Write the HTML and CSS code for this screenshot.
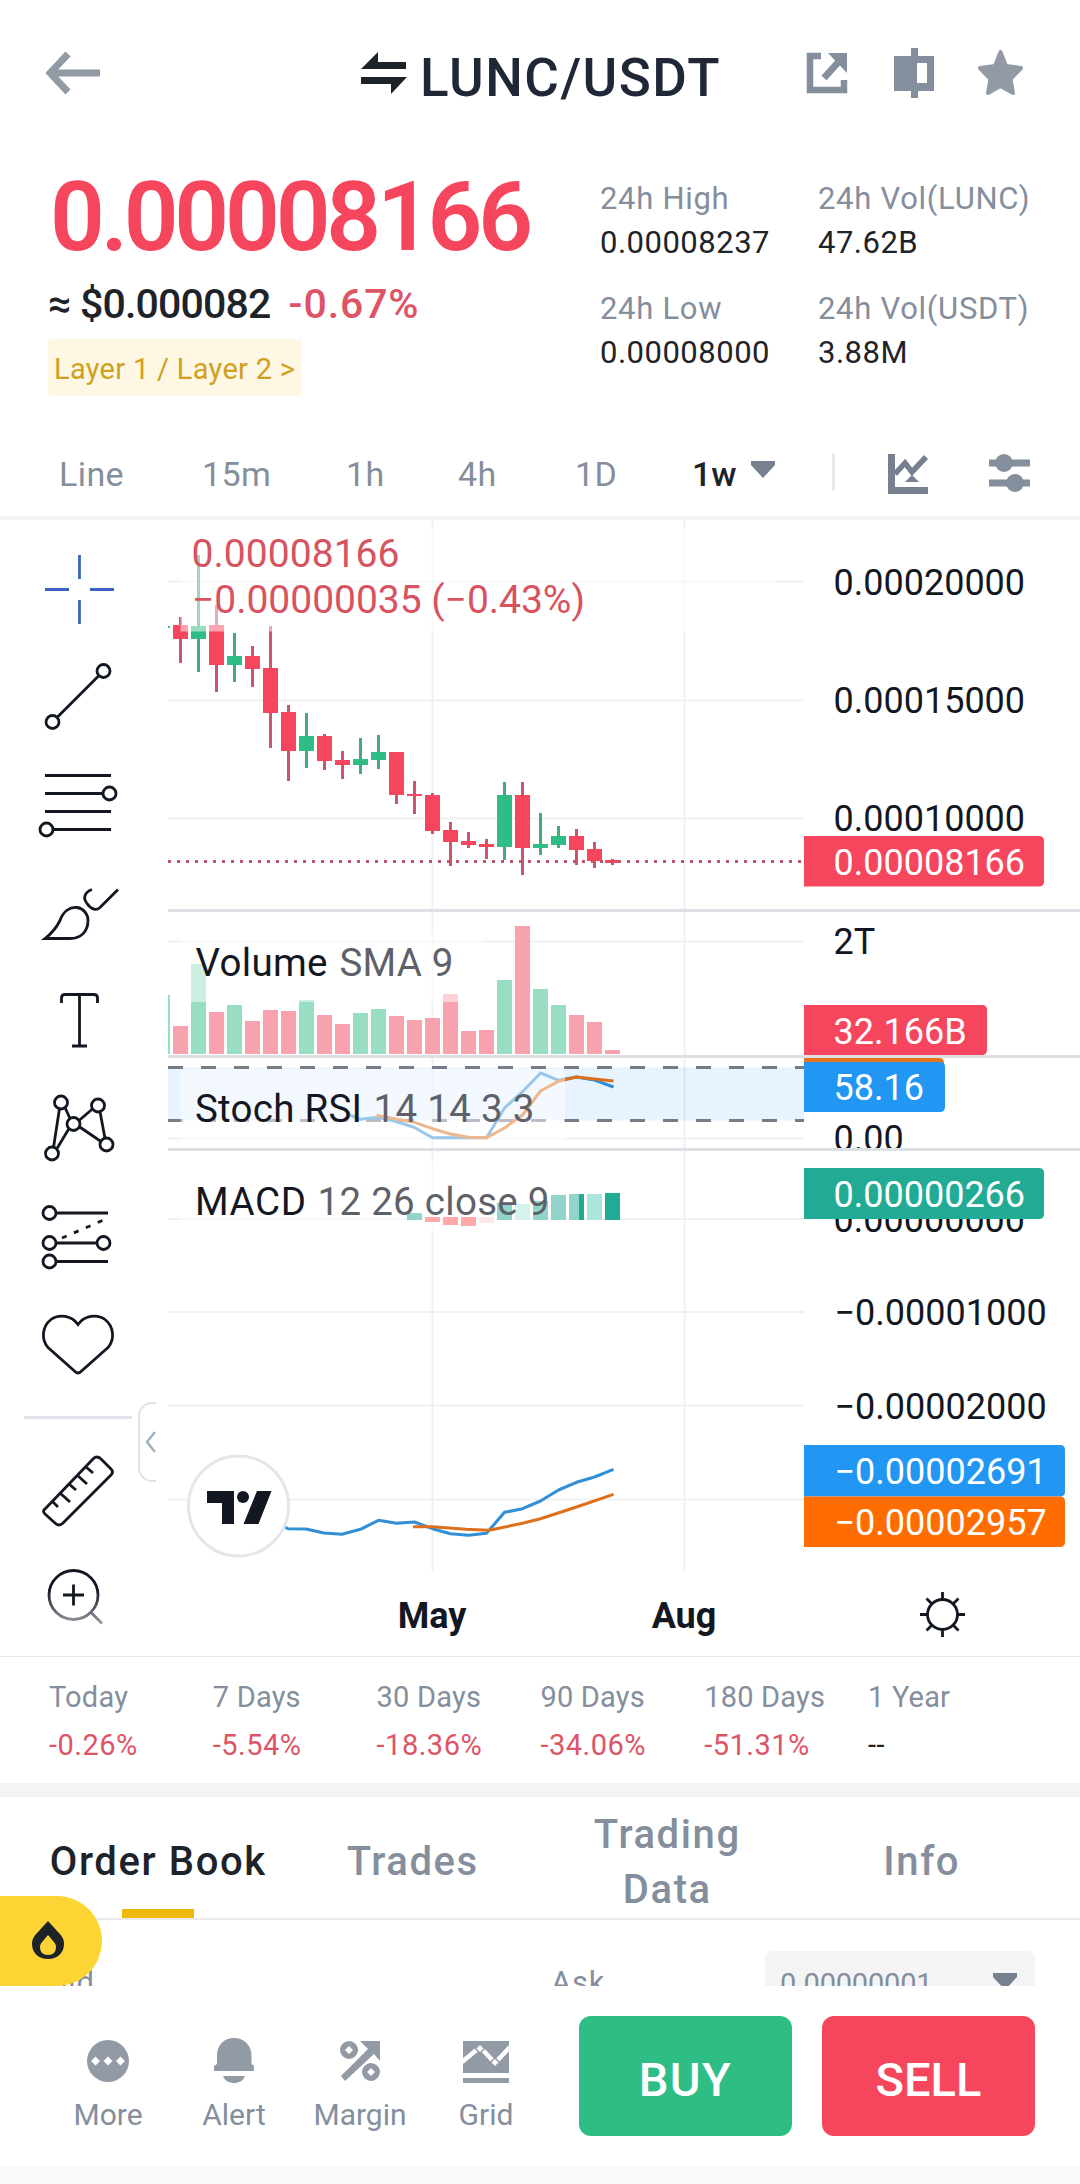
FILE: index.html
```html
<!DOCTYPE html>
<html lang="en">
<head>
    <meta charset="UTF-8">
    <meta name="viewport" content="width=device-width, initial-scale=1.0">
    <title>LUNC/USDT</title>
    <link rel="stylesheet" href="styles.css">
</head>
<body>
    <header class="header">
        <svg class="back" width="54" height="44" viewBox="45 51 54 44"><path d="M67 54 49 73l18 19M49 73h50" fill="none" stroke="#929aa5" stroke-width="7"/></svg>
        <svg class="swap" width="46" height="44" viewBox="361 51 46 44" fill="#1e2329"><path d="M361 69 378 52v10h28v7zM361 77h46l-16 17V84h-30z"/></svg>
        <h1 class="pair">LUNC/USDT</h1>
        <div class="header-icons">
            <svg width="46" height="52" viewBox="804 47 46 52"><path d="M821 56h-11v34h34V80" fill="none" stroke="#848e9c" stroke-width="6.500"/><path d="M824 78l18-20" stroke="#848e9c" stroke-width="7"/><path d="M828 53h19v20z" fill="#848e9c"/></svg>
            <svg width="46" height="52" viewBox="891 47 46 52" fill="#848e9c"><path fill-rule="evenodd" d="M894 56h17v-8h7v8h16v35h-16v7h-7v-7h-17zM917 63v20h10V63z"/></svg>
            <svg width="46" height="52" viewBox="978 47 46 52"><path d="M1000.500 52l5.500 14 15 2-10.500 11 2.500 14-12.500-7-12.500 7 2.500-14L980 68l15-2z" fill="#929aa5" stroke="#929aa5" stroke-width="4" stroke-linejoin="round"/></svg>
        </div>
    </header>

    <section class="summary">
        <div class="summary-main">
            <div class="price">0.00008166</div>
            <div class="fiat"><span class="fiat-value">≈ $0.000082</span><span class="fiat-change">-0.67%</span></div>
            <a class="tag">Layer 1 / Layer 2 &gt;</a>
        </div>
        <dl class="stats">
            <div><dt>24h High</dt><dd>0.00008237</dd></div>
            <div><dt>24h Vol(LUNC)</dt><dd>47.62B</dd></div>
            <div><dt>24h Low</dt><dd>0.00008000</dd></div>
            <div><dt>24h Vol(USDT)</dt><dd>3.88M</dd></div>
        </dl>
    </section>

    <nav class="intervals">
        <span>Line</span>
        <span>15m</span>
        <span>1h</span>
        <span>4h</span>
        <span>1D</span>
        <span class="active">1w</span>
        <svg class="caret" width="24" height="17" viewBox="0 0 24 17"><path d="M0 0h24v4L12 17 0 4z" fill="#76808f"/></svg>
        <i class="sep"></i>
        <svg width="42" height="42" viewBox="888 452 42 42"><path d="M889 453h7v33h33v7h-40z" fill="#76808f"/><path d="M896 473l10-11 7 9 14-15" fill="none" stroke="#76808f" stroke-width="5.500"/><path d="M913 474l7 7h-14z" fill="#76808f"/></svg>
        <svg width="42" height="42" viewBox="990 451 42 42" fill="#848e9c"><path d="M990 457.500h41v7h-41zM990 477.500h41v7h-41z"/><circle cx="1005" cy="461" r="9"/><circle cx="1016" cy="481" r="9"/></svg>
    </nav>

    <section class="chart">
        <aside class="tools">
            <svg class="tool" viewBox="0 536 168 107.500"><path class="cross" d="M79.500 555v24M79.500 600v24M45 589.500h24M90 589.500h24"/></svg>
            <svg class="tool" viewBox="0 643.500 168 107.500"><path d="M57 717l42-42"/><circle cx="103.500" cy="670.500" r="6.500"/><circle cx="52.500" cy="721.500" r="6.500"/></svg>
            <svg class="tool" viewBox="0 751 168 107.500"><path d="M45 775.500h66M45 793.500h58M45 811.500h66M53 829.500h58"/><circle cx="109.500" cy="793.500" r="6.500"/><circle cx="46.500" cy="829.500" r="6.500"/></svg>
            <svg class="tool" viewBox="0 858.500 168 107.500"><path d="M45 938c8-6 12-12 15-18 3-9 10-14 17-13 7 1 11 7 11 13 0 11-7 18-18 18zM92 889c-8 3-9 9-5 14 4 6 10 8 14 3l17-17"/></svg>
            <svg class="tool" viewBox="0 966 168 107.500"><path d="M61.500 1003v-5q0-3.500 3.500-3.500h29q3.500 0 3.500 3.500v5M79.500 995v51M72 1046h15"/></svg>
            <svg class="tool" viewBox="0 1073.500 168 107.500"><path d="M59.500 1108l-6 39M65 1107l5 11M57 1148l12-20M79 1120l14-12M100 1111l5 27M79 1126l22 15"/><circle cx="61" cy="1102" r="6.500"/><circle cx="98" cy="1105" r="6.500"/><circle cx="73.500" cy="1123.500" r="6.500"/><circle cx="106.500" cy="1144" r="6.500"/><circle cx="52" cy="1153" r="6.500"/></svg>
            <svg class="tool" viewBox="0 1181 168 107.500"><path d="M56 1213h52M56 1243h41M56 1261.500h52"/><path d="M62 1238l44-19" stroke-dasharray="5 8"/><circle cx="49.500" cy="1213" r="6.500"/><circle cx="49.500" cy="1243" r="6.500"/><circle cx="103.500" cy="1243" r="6.500"/><circle cx="49.500" cy="1261.500" r="6.500"/></svg>
            <svg class="tool" viewBox="0 1288.500 168 107.500"><path d="M78 1324c-6-9-19-11-27-5-9 7-10 20-3 28l27 24q3 3 6 0l27-24c7-8 6-21-3-28-8-6-21-4-27 5z"/></svg>
            <i class="tools-line"></i>
            <svg class="tool" viewBox="0 1437 168 107.500"><path d="M45 1509l48-50q4-4 8 0l10 10q3 3 0 6l-48 48q-4 4-8 0l-10-9q-3-3 0-5zM52 1501l6 6M60 1493l10 9M69 1484l7 6M77 1475l10 9M86 1467l7 6"/></svg>
            <svg class="tool" viewBox="0 1544.500 168 107.500">
                <defs><linearGradient id="fade" gradientUnits="userSpaceOnUse" x1="0" y1="1590" x2="0" y2="1624"><stop offset="0" stop-color="#131722"/><stop offset="1" stop-color="#9a9da5"/></linearGradient></defs>
                <circle class="lens" cx="73.500" cy="1594.500" r="24.500"/><path class="lens" d="M91 1612l11 11"/><path d="M63 1594.500h21M73.500 1584v21"/>
            </svg>
            <div class="tools-handle"><svg width="12" height="22" viewBox="0 0 12 22"><path d="M10 1 2 11l8 10" fill="none" stroke="#9db2bd" stroke-width="2.500"/></svg></div>
        </aside>

        <svg class="plot" width="912" height="1140" viewBox="168 516 912 1140">
            <g class="grid">
                <path d="M432.500 516v1055M684.500 516v1055"/>
                <path d="M168 581.500h636M168 700.500h636M168 818.500h636M168 941.500h636M168 1138.500h636M168 1219h636M168 1312h636M168 1405.500h636M168 1499.500h636"/>
            </g>

            <!-- stoch rsi band -->
            <path d="M168 1067.500h636v53H168z" fill="#2196f3" fill-opacity=".11"/>
            <path class="band-line" d="M168 1067.500h636M168 1120.500h636"/>
            <path class="line-k" d="M350 1115 360 1119.300 378.500 1117.300 395 1121.300 414 1127.300 432.500 1137.700H486.500L504.500 1108 522.500 1091.700 540.500 1073 558.500 1080.300 576.500 1077 594.500 1080 613.500 1087"/>
            <path class="line-d" d="M376.500 1115.300 396.500 1119.300 414.500 1122.300 432.500 1128.700 450.500 1134 468.500 1137.300 486.500 1137.700 504.500 1128 522.500 1115 540.500 1091 558.500 1081.300 576.500 1077 594.500 1079 613.500 1081"/>

            <g id="candles"><path d="M168 626h2v2h-2z" fill="#2ebd85"/></g>
            <g id="volume"><path d="M168 995h2v59h-2z" fill="#97dec2"/></g>
            <g id="histogram"></g>

            <!-- macd and signal -->
            <path class="line-k" d="M282 1525.500 288 1528.700 306 1529 324 1533 342 1534.300 360.500 1529.300 378.500 1520.300 396.500 1523.300 414.500 1522 432.500 1528.700 450.500 1533.700 468.500 1535.300 486.500 1533.300 504.500 1512.300 522.500 1508.700 540.500 1501 558.500 1490 576.500 1482.300 594.500 1477 613.500 1469.300"/>
            <path class="line-d" d="M413 1526.700H432.500L466 1529.300 489 1530.300 522.500 1523.300 540.500 1518.700 576.500 1507 613.500 1494.300"/>

            <path class="price-line" d="M168 861.500h636"/>

            <g fill="#fff" fill-opacity=".5">
                <path d="M180.500 528h595v103.500h-595z"/>
                <path d="M180.500 932h304v70h-304z"/>
                <path d="M180.500 1069h384.500v71h-384.500z"/>
                <path d="M180.500 1162h398.500v71h-398.500z"/>
            </g>

            <path class="pane-line" d="M168 910.500h912M168 1056.500h912M168 1149.500h912"/>

            <g class="quote">
                <text x="191.500" y="566.500" textLength="208">0.00008166</text>
                <text x="192" y="612.500" textLength="393">−0.00000035 (−0.43%)</text>
            </g>
            <g class="legend">
                <text x="195.500" y="975.500" textLength="132">Volume</text><text class="muted" x="339.500" y="975.500" textLength="114">SMA 9</text>
                <text x="195" y="1121.500" textLength="167">Stoch RSI</text><text class="muted" x="373.500" y="1121.500" textLength="161">14 14 3 3</text>
                <text x="195" y="1214.500" textLength="111">MACD</text><text class="muted" x="317.500" y="1214.500" textLength="232">12 26 close 9</text>
            </g>

            <g class="axis">
                <text x="833.500" y="594.500">0.00020000</text>
                <text x="833.500" y="712.500">0.00015000</text>
                <text x="833.500" y="830.500">0.00010000</text>
                <text x="833.500" y="954">2T</text>
                <text x="833.500" y="1231.500">0.00000000</text>
                <text x="834.500" y="1325">−0.00001000</text>
                <text x="834.500" y="1418.500">−0.00002000</text>
            </g>
            <svg x="804" y="1112" width="276" height="36"><text class="axis" x="29.500" y="38.500">0.00</text></svg>

            <path d="M804 1058h135q5 0 5 5v5H804z" fill="#e5751f"/>
            <g class="badges">
                <path d="M804 836h235q5 0 5 5v40.500q0 5-5 5H804z" fill="#f6465d"/><text x="833.500" y="875">0.00008166</text>
                <path d="M804 1005h178q5 0 5 5v40q0 5-5 5H804z" fill="#f6465d"/><text x="833.500" y="1044">32.166B</text>
                <path d="M804 1062h136q5 0 5 5v40q0 5-5 5H804z" fill="#2196f3"/><text x="833.500" y="1100">58.16</text>
                <path d="M804 1168h235q5 0 5 5v41q0 5-5 5H804z" fill="#22ab94"/><text x="833.500" y="1207">0.00000266</text>
                <path d="M804 1445h256q5 0 5 5v41.500q0 5-5 5H804z" fill="#2196f3"/><text x="834.500" y="1484">−0.00002691</text>
                <path d="M804 1496.500h256q5 0 5 5v40.500q0 5-5 5H804z" fill="#ff6d00"/><text x="834.500" y="1535">−0.00002957</text>
            </g>

            <circle cx="238.500" cy="1506" r="50" fill="#fff" stroke="#e6e6e6" stroke-width="3"/>
            <path d="M207 1491h27v33h-12v-21h-15zM257 1491h14.500l-13 33h-15z" fill="#131722"/>
            <circle cx="243" cy="1497" r="6" fill="#131722"/>

            <g class="months">
                <text x="432" y="1627.500">May</text>
                <text x="684" y="1627.500">Aug</text>
            </g>
            <g class="gear">
                <circle cx="942.500" cy="1614.500" r="15"/>
                <path d="M942.500 1592v7M942.500 1630v7M920 1614.500h7M958 1614.500h7M926.500 1598.500l5 5M953.500 1625.500l5 5M958.500 1598.500l-5 5M931.500 1625.500l-5 5"/>
            </g>
        </svg>
    </section>

    <section class="performance">
        <div><span>Today</span><b>-0.26%</b></div>
        <div><span>7 Days</span><b>-5.54%</b></div>
        <div><span>30 Days</span><b>-18.36%</b></div>
        <div><span>90 Days</span><b>-34.06%</b></div>
        <div><span>180 Days</span><b>-51.31%</b></div>
        <div><span>1 Year</span><b class="none">--</b></div>
    </section>

    <nav class="tabs">
        <a class="tab active">Order Book</a>
        <a class="tab">Trades</a>
        <a class="tab">Trading<br>Data</a>
        <a class="tab">Info</a>
    </nav>

    <section class="orders">
        <span class="bid">Bid</span>
        <span class="ask">Ask</span>
        <div class="precision"><span>0.00000001</span><svg width="24" height="17" viewBox="0 0 24 17"><path d="M0 0h24v4L12 17 0 4z" fill="#76808f"/></svg></div>
    </section>

    <button class="fire">
        <svg width="34" height="40" viewBox="31 1920 34 40"><path fill-rule="evenodd" d="M48 1921l10 11c4 4 6 7 6 12 0 9-7 15-16 15s-16-6-16-15c0-5 2-8 6-12zM48 1935l-5 6c-2 2-3 4-3 6 0 5 3 8 8 8s8-3 8-8c0-2-1-4-3-6z" fill="#1e2329"/></svg>
    </button>

    <footer class="bottom-bar">
        <a class="action">
            <svg width="48" height="48" viewBox="84 2037 48 48"><circle cx="108" cy="2061" r="21"/><path d="M95.500 2056.500l4.500 4.500-4.500 4.500L91 2061zM108 2056.500l4.500 4.500-4.500 4.500-4.500-4.500zM120.500 2056.500l4.500 4.500-4.500 4.500-4.500-4.500z" fill="#fff"/></svg>
            <span>More</span>
        </a>
        <a class="action">
            <svg width="48" height="48" viewBox="210 2037 48 48"><path d="M217 2056c0-11 7-18 17-18s17.500 7 17.500 18v8l2.500 2v5h-40v-5l3-2zM223 2076h22c-2 5-6 7-11 7s-9-2-11-7z"/></svg>
            <span>Alert</span>
        </a>
        <a class="action">
            <svg width="48" height="48" viewBox="336 2037 48 48"><path fill-rule="evenodd" d="M349 2041a9 9 0 1 0 0 18 9 9 0 0 0 0-18zM349 2046l4 4-4 4-4-4zM371 2063a9 9 0 1 0 0 18 9 9 0 0 0 0-18zM371 2068l4 4-4 4-4-4zM360 2041h20v20l-6-7-29 27-4-5 27-27z"/></svg>
            <span>Margin</span>
        </a>
        <a class="action">
            <svg width="48" height="48" viewBox="462 2037 48 48"><path d="M463 2041h46v32h-46zM463 2078h46v5h-46z"/><path d="M462 2062l18-15 15 16 15-16" fill="none" stroke="#fff" stroke-width="4.500"/><path d="M480 2044l4.500 4.500-4.500 4.500-4.500-4.500zM495 2058l4.500 4.500-4.500 4.500-4.500-4.500z" fill="#fff" stroke="#929aa5" stroke-width="1.500"/></svg>
            <span>Grid</span>
        </a>
        <button class="trade buy">BUY</button>
        <button class="trade sell">SELL</button>
    </footer>

    <script src="script.js"></script>
</body>
</html>
```

FILE: styles.css
```css
* {
    margin: 0;
    padding: 0;
    box-sizing: border-box;
}

body {
    position: relative;
    width: 1080px;
    height: 2184px;
    overflow: hidden;
    background: #fafafa;
    color: #1e2329;
    font-family: Roboto, "Liberation Sans", sans-serif;
}

svg {
    display: block;
    flex: none;
}

button {
    border: none;
    font-family: inherit;
}

/* Header */
.header {
    display: flex;
    align-items: center;
    height: 146px;
    padding: 0 56px 0 46px;
    background: #fff;
}

.swap {
    margin-left: 261px;
}

.pair {
    margin-left: 13px;
    padding-top: 10px;
    font-size: 53px;
    line-height: 60px;
    font-weight: 500;
    letter-spacing: 1.5px;
    color: #202838;
    white-space: nowrap;
}

.header-icons {
    display: flex;
    gap: 41px;
    margin-left: auto;
}

/* Price summary */
.summary {
    display: flex;
    height: 287px;
    padding: 20px 0 0 48px;
    background: #fff;
}

.summary-main {
    width: 552px;
}

.price {
    height: 100px;
    padding-left: 2px;
    font-size: 96px;
    line-height: 102px;
    font-weight: 600;
    letter-spacing: -4.2px;
    color: #f6465d;
}

.fiat {
    display: flex;
    gap: 18px;
    margin-top: 12px;
    font-size: 41px;
    line-height: 52px;
    height: 50px;
    font-weight: 500;
    letter-spacing: -0.8px;
}

.fiat-change {
    color: #dd5467;
    letter-spacing: 0.9px;
}

.tag {
    display: block;
    width: 254px;
    height: 57px;
    margin-top: 11px;
    padding-left: 6px;
    border-radius: 4px;
    background: #fdf7e3;
    color: #d0a11e;
    font-size: 29px;
    line-height: 60px;
    letter-spacing: 0.3px;
    white-space: nowrap;
}

.stats {
    display: grid;
    grid-template-columns: 218px 240px;
    row-gap: 22px;
    align-content: start;
    padding-top: 11px;
    font-size: 31px;
    line-height: 44px;
    letter-spacing: 0.5px;
    white-space: nowrap;
}

.stats dt {
    color: #848e9c;
    letter-spacing: 0.7px;
}

/* Interval tabs */
.intervals {
    display: grid;
    grid-template-columns: 143px 144px 112px 117px 117px 59px 81px 55px 102px 1fr;
    align-items: center;
    height: 87px;
    padding: 0 0 2px 59px;
    border-bottom: 4px solid #f3f4f4;
    background: #fff;
    color: #848e9c;
    font-size: 34px;
    line-height: 44px;
    letter-spacing: 0.4px;
}

.intervals .active {
    color: #1e2329;
    font-weight: 500;
    letter-spacing: 0;
}

.caret {
    margin-bottom: 8px;
}

.sep {
    width: 3px;
    height: 36px;
    margin-bottom: 4px;
    background: #e8e9eb;
}

/* Chart */
.chart {
    display: flex;
    height: 1136px;
    background: #fff;
}

.tools {
    position: relative;
    display: flex;
    flex-direction: column;
    width: 168px;
    padding-top: 16px;
}

.tool {
    width: 168px;
    height: 107.5px;
    fill: none;
    stroke: #131722;
    stroke-width: 2.8;
}

.tool .cross {
    stroke: #3a63c4;
}

.tool .lens {
    stroke: url(#fade);
}

.tools-line {
    width: 108px;
    height: 3px;
    margin: 20px 0 18px 24px;
    background: #e0e3eb;
}

.tools-handle {
    position: absolute;
    top: 882px;
    left: 138px;
    display: flex;
    align-items: center;
    width: 18px;
    height: 80px;
    padding-left: 5px;
    border: 2.5px solid #e0e3eb;
    border-right: none;
    border-radius: 14px 0 0 14px;
    overflow: hidden;
}

.plot {
    margin-top: -4px;
}

.grid path {
    stroke: #eff1f2;
    stroke-width: 2;
}

.pane-line {
    stroke: #dde1e5;
    stroke-width: 3;
}

.price-line {
    stroke: #bf5568;
    stroke-width: 3;
    stroke-dasharray: 3 6;
}

.band-line {
    stroke: #787b86;
    stroke-width: 3;
    stroke-dasharray: 15 18;
}

.line-k,
.line-d {
    fill: none;
    stroke-width: 3;
    stroke-linejoin: round;
}

.line-k {
    stroke: #318fd6;
}

.line-d {
    stroke: #de6f1c;
}

.up {
    fill: #2ebd85;
}

.down {
    fill: #f6465d;
}

.up-wick {
    fill: #45a980;
}

.down-wick {
    fill: #c9566a;
}

.up-volume {
    fill: #97dec2;
}

.down-volume {
    fill: #f9a2af;
}

.quote {
    fill: #d6535f;
    font-size: 39px;
}

.legend {
    fill: #131722;
    font-size: 38.5px;
}

.legend .muted {
    fill: #5f6168;
}

.axis,
.badges {
    fill: #131722;
    font-size: 36px;
}

.badges text {
    fill: #fff;
}

.months {
    fill: #131722;
    font-size: 36px;
    font-weight: 700;
    text-anchor: middle;
}

.gear {
    fill: none;
    stroke: #131722;
    stroke-width: 2.8;
}

/* Performance */
.performance {
    display: grid;
    grid-template-columns: repeat(6, 163.8px);
    height: 127px;
    padding: 16px 0 0 49px;
    border-top: 1px solid #e6e7e9;
    background: #fff;
    font-size: 29px;
    line-height: 48px;
    letter-spacing: 0.2px;
    white-space: nowrap;
}

.performance span,
.performance b {
    display: block;
    font-weight: 400;
}

.performance span {
    color: #848e9c;
}

.performance b {
    color: #dd5467;
    letter-spacing: 0.5px;
}

.performance .none {
    color: #1e2329;
}

/* Section tabs */
.tabs {
    display: grid;
    grid-template-columns: repeat(4, 254.5px);
    align-items: stretch;
    height: 137px;
    padding: 0 31px;
    border-top: 14px solid #f4f4f4;
    border-bottom: 2px solid #eaeaec;
    background: #fff;
}

.tab {
    position: relative;
    display: flex;
    align-items: center;
    justify-content: center;
    padding-top: 8px;
    color: #848e9c;
    font-size: 40px;
    line-height: 55px;
    font-weight: 500;
    letter-spacing: 1.6px;
    text-align: center;
    white-space: nowrap;
}

.tab.active {
    color: #1e2329;
}

.tab.active::after {
    content: "";
    position: absolute;
    bottom: 0;
    left: 91px;
    width: 72px;
    height: 9px;
    background: #efb90b;
}

/* Order book head */
.orders {
    display: flex;
    height: 66px;
    padding: 31px 45px 0 48px;
    overflow: hidden;
    background: #fff;
    color: #848e9c;
    font-size: 31px;
    line-height: 64px;
    letter-spacing: 0.8px;
}

.bid {
    width: 503px;
}

.precision {
    display: flex;
    align-items: center;
    justify-content: space-between;
    width: 270px;
    height: 66px;
    margin-left: auto;
    padding: 0 18px 0 15px;
    border-radius: 8px;
    background: #f4f4f4;
    font-size: 29px;
    letter-spacing: -0.2px;
}

.precision svg {
    margin-bottom: 6px;
}

.fire {
    position: absolute;
    left: 0;
    top: 1896px;
    width: 102px;
    height: 90px;
    padding: 0 0 2px 31px;
    border-radius: 0 45px 45px 0;
    background: #fcd535;
}

/* Bottom bar */
.bottom-bar {
    display: flex;
    height: 180px;
    padding: 30px 45px 0 45px;
    background: #fff;
}

.action {
    display: flex;
    flex-direction: column;
    align-items: center;
    width: 126px;
    padding-top: 21px;
    color: #848e9c;
    font-size: 30px;
    line-height: 40px;
}

.action svg {
    margin-bottom: 10px;
    fill: #929aa5;
}

.trade {
    width: 213px;
    height: 120px;
    padding-top: 7px;
    border-radius: 12px;
    color: #fff;
    font-size: 47px;
    font-weight: 500;
}

.buy {
    margin-left: 30px;
    background: #2ebd85;
    letter-spacing: 1.5px;
}

.sell {
    margin-left: auto;
    background: #f6465d;
}
```

FILE: script.js
```js
const FIRST_X = 180.5;
const STEP = 18;
const BAR = 15;

// [up, body top, body bottom, high, low]
const candles = [
    [0, 625, 639, 617, 663],
    [1, 626, 639, 555, 672],
    [0, 625, 665, 605, 692],
    [1, 656, 665, 633, 682],
    [0, 656, 669, 646, 687],
    [0, 668, 713, 626, 748],
    [0, 712, 751, 705, 781],
    [1, 736, 751, 713, 768],
    [0, 736, 761, 734, 770],
    [0, 760, 765, 751, 779],
    [1, 759, 765, 738, 774],
    [1, 752, 760, 735, 769],
    [0, 752, 795, 752, 804],
    [0, 794, 796, 781, 814],
    [0, 795, 831, 793, 834],
    [0, 830, 842, 822, 866],
    [0, 841, 845, 832, 848],
    [0, 844, 847, 839, 859],
    [1, 795, 847, 782, 860],
    [0, 795, 848, 782, 875],
    [1, 844, 848, 813, 855],
    [1, 836, 845, 826, 848],
    [0, 836, 850, 829, 865],
    [0, 849, 861, 842, 868],
    [0, 860, 863, 859, 865]
];

// [up, top]
const volume = [
    [0, 1026], [1, 964], [0, 1012], [1, 1005], [0, 1021], [0, 1010], [0, 1011],
    [1, 1000], [0, 1015], [0, 1024], [1, 1013], [1, 1009], [0, 1016], [0, 1020],
    [0, 1018], [0, 994], [0, 1031], [0, 1030], [1, 980], [0, 926], [1, 989],
    [1, 1005], [0, 1015], [0, 1022], [0, 1050]
];

// [index, top, bottom, color]
const histogram = [
    [13, 1213, 1220, '#22ab94'],
    [14, 1217, 1222, '#ff5252'],
    [15, 1217, 1225, '#ff5252'],
    [16, 1217, 1226, '#ff5252'],
    [17, 1217, 1223, '#fccbcd'],
    [18, 1203, 1220, '#22ab94'],
    [19, 1204, 1220, '#ace5dc'],
    [20, 1201, 1220, '#22ab94'],
    [21, 1195, 1220, '#22ab94'],
    [22, 1194, 1220, '#22ab94'],
    [23, 1194, 1220, '#ace5dc'],
    [24, 1193, 1220, '#22ab94']
];

function rect(parent, x, y, width, height, className, fill) {
    const el = document.createElementNS('http://www.w3.org/2000/svg', 'rect');
    el.setAttribute('x', x);
    el.setAttribute('y', y);
    el.setAttribute('width', width);
    el.setAttribute('height', height);
    if (className) el.setAttribute('class', className);
    if (fill) el.setAttribute('fill', fill);
    document.getElementById(parent).appendChild(el);
}

candles.forEach(([up, top, bottom, high, low], i) => {
    const x = FIRST_X + i * STEP;
    rect('candles', x - 1.5, high, 3, low - high, up ? 'up-wick' : 'down-wick');
    rect('candles', x - BAR / 2, top, BAR, bottom - top, up ? 'up' : 'down');
});

volume.forEach(([up, top], i) => {
    rect('volume', FIRST_X + i * STEP - BAR / 2, top, BAR, 1054 - top, up ? 'up-volume' : 'down-volume');
});

histogram.forEach(([i, top, bottom, color]) => {
    rect('histogram', FIRST_X + i * STEP - BAR / 2, top, BAR, bottom - top, null, color);
});
```
